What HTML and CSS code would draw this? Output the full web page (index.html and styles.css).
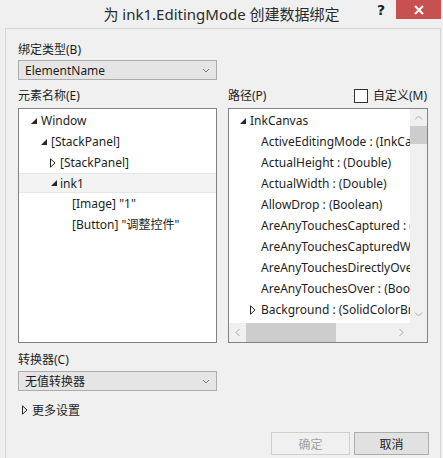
FILE: index.html
```html
<!DOCTYPE html>
<html>
<head>
<meta charset="utf-8">
<link rel="stylesheet" href="styles.css">
</head>
<body>
<div class="window">
  <div class="titlebar">
    <div class="title">为 ink1.EditingMode 创建数据绑定</div>
    <div class="help">?</div>
    <div class="close"><svg width="12" height="12" viewBox="0 0 12 12"><path d="M2 2 L10 10 M10 2 L2 10" stroke="#fff" stroke-width="2"/></svg></div>
  </div>
  <div class="panel">
    <div class="label">绑定类型(B)</div>
    <div class="combo first-combo"><span>ElementName</span><svg class="chev" width="8" height="5" viewBox="0 0 8 5"><path d="M1 1 L4 4 L7 1" stroke="#7a7a7a" fill="none"/></svg></div>

    <div class="columns">
      <div class="col">
        <div class="col-head"><span class="label">元素名称(E)</span></div>
        <div class="box tree">
          <div class="row l0"><span class="arr exp"><svg width="6" height="6" viewBox="0 0 6 6"><path d="M6 0 L6 6 L0 6 Z" fill="#262626"/></svg></span>Window</div>
          <div class="row l1"><span class="arr exp"><svg width="6" height="6" viewBox="0 0 6 6"><path d="M6 0 L6 6 L0 6 Z" fill="#262626"/></svg></span>[StackPanel]</div>
          <div class="row l2"><span class="arr col-arr"><svg width="6" height="10" viewBox="0 0 6 10"><path d="M0.5 0.8 L5 5 L0.5 9.2 Z" fill="none" stroke="#262626"/></svg></span>[StackPanel]</div>
          <div class="row l2 sel"><span class="arr exp"><svg width="6" height="6" viewBox="0 0 6 6"><path d="M6 0 L6 6 L0 6 Z" fill="#262626"/></svg></span>ink1</div>
          <div class="row l3">[Image] "1"</div>
          <div class="row l3">[Button] "调整控件"</div>
        </div>
      </div>
      <div class="col">
        <div class="col-head"><span class="label">路径(P)</span><span class="check"><span class="cbox"></span><span class="label">自定义(M)</span></span></div>
        <div class="box pathbox">
          <div class="pathview">
            <div class="row p0"><span class="arr exp"><svg width="6" height="6" viewBox="0 0 6 6"><path d="M6 0 L6 6 L0 6 Z" fill="#262626"/></svg></span>InkCanvas</div>
            <div class="row p1">ActiveEditingMode : (InkCanvasEditingMode)</div>
            <div class="row p1">ActualHeight : (Double)</div>
            <div class="row p1">ActualWidth : (Double)</div>
            <div class="row p1">AllowDrop : (Boolean)</div>
            <div class="row p1">AreAnyTouchesCaptured : (Boolean)</div>
            <div class="row p1">AreAnyTouchesCapturedWithin : (Boolean)</div>
            <div class="row p1">AreAnyTouchesDirectlyOver : (Boolean)</div>
            <div class="row p1">AreAnyTouchesOver : (Boolean)</div>
            <div class="row p0b"><span class="arr col-arr"><svg width="6" height="10" viewBox="0 0 6 10"><path d="M0.5 0.8 L5 5 L0.5 9.2 Z" fill="none" stroke="#262626"/></svg></span>Background : (SolidColorBrush)</div>
            <div class="row p0b"><span class="arr col-arr"><svg width="6" height="10" viewBox="0 0 6 10"><path d="M0.5 0.8 L5 5 L0.5 9.2 Z" fill="none" stroke="#262626"/></svg></span>BindingGroup : (BindingGroup)</div>
          </div>
          <div class="vscroll">
            <svg class="sarrow" width="9" height="5" viewBox="0 0 9 5"><path d="M1 4.5 L4.5 1 L8 4.5" stroke="#a6a6a6" fill="none"/></svg>
            <div class="vthumb"></div>
            <div class="vfill"></div>
            <svg class="sarrow" width="9" height="5" viewBox="0 0 9 5"><path d="M1 0.5 L4.5 4 L8 0.5" stroke="#a6a6a6" fill="none"/></svg>
          </div>
          <div class="hscroll">
            <svg class="harrow" width="5" height="9" viewBox="0 0 5 9"><path d="M4.5 1 L1 4.5 L4.5 8" stroke="#a6a6a6" fill="none"/></svg>
            <div class="hthumb"></div>
            <div class="hfill"></div>
            <svg class="harrow" width="5" height="9" viewBox="0 0 5 9"><path d="M0.5 1 L4 4.5 L0.5 8" stroke="#a6a6a6" fill="none"/></svg>
          </div>
          <div class="corner"></div>
        </div>
      </div>
    </div>

    <div class="label conv-label">转换器(C)</div>
    <div class="combo conv-combo"><span>无值转换器</span><svg class="chev" width="8" height="5" viewBox="0 0 8 5"><path d="M1 1 L4 4 L7 1" stroke="#7a7a7a" fill="none"/></svg></div>

    <div class="more"><svg width="6" height="10" viewBox="0 0 6 10"><path d="M0.5 0.8 L5 5 L0.5 9.2 Z" fill="none" stroke="#262626"/></svg><span>更多设置</span></div>

    <div class="buttons">
      <div class="btn disabled">确定</div>
      <div class="btn cancel">取消</div>
    </div>
  </div>
</div>
</body>
</html>
```
FILE: styles.css
```css
* { box-sizing: border-box; }
html, body { margin: 0; padding: 0; }
body {
  width: 443px; height: 458px; overflow: hidden;
  background: #f0f0f0;
  font-family: "Segoe UI", "Noto Sans", "Noto Sans CJK SC", sans-serif;
  font-size: 12px; color: #1e1e1e;
}
.window { width: 443px; height: 458px; display: flex; flex-direction: column; }
.titlebar { height: 28px; position: relative; flex: none; }
.title {
  text-align: center; font-size: 15px; line-height: 28px; color: #2b2b2b;
  font-family: "Segoe UI", "Noto Sans", "Noto Sans CJK SC", sans-serif;
}
.help {
  position: absolute; left: 377px; top: 1px; font-weight: bold; font-size: 14px;
  line-height: 18px; color: #222; font-family: "DejaVu Sans", sans-serif;
}
.close {
  position: absolute; left: 396px; top: 0; width: 45px; height: 19px;
  background: #c75050; display: flex; align-items: center; justify-content: center;
}
.panel {
  flex: 1; margin-left: 5px; width: 436px;
  border: 1px solid #d5d5d5; border-bottom: none;
  padding: 13px 0 0 12px;
  display: flex; flex-direction: column;
}
.label { line-height: 16px; height: 16px; white-space: nowrap; }
.combo {
  width: 199px; height: 20px; border: 1px solid #acacac; background: #e5e5e5;
  display: flex; align-items: center; justify-content: space-between;
  padding: 0 6px 0 6px;
}
.first-combo { margin-top: 2px; }
.chev { margin-right: 0; }
.columns { display: flex; gap: 11px; margin-top: 8px; }
.col { width: 199px; display: flex; flex-direction: column; }
.col + .col { width: 200px; }
.col-head { display: flex; justify-content: space-between; align-items: center; height: 16px; }
.check { display: flex; align-items: center; gap: 5px; margin-right: 1px; }
.cbox { width: 14px; height: 14px; border: 1px solid #333; background: #fff; }
.box {
  margin-top: 4px; height: 235px; border: 1px solid #828282; background: #fff;
  overflow: hidden;
}
.tree { padding-top: 1px; }
.row { height: 21px; line-height: 21px; display: flex; align-items: center; white-space: nowrap; }
.arr { width: 10px; display: flex; align-items: center; flex: none; }
.l0 { padding-left: 12px; }
.l1 { padding-left: 22px; }
.l2 { padding-left: 31px; }
.l2 .arr.exp { padding-left: 1px; }
.l3 { padding-left: 53px; }
.sel { background: #f3f3f3; border-top: 1px solid #e6e6e6; border-bottom: 1px solid #e6e6e6; height: 20px; }
.pathbox {
  display: grid; grid-template-columns: 181px 17px; grid-template-rows: 214px 19px;
}
.pathview { overflow: hidden; padding-top: 1px; }
.p0 { padding-left: 11px; }
.p0b { padding-left: 21px; }
.p0b .arr { width: 11px; }
.p1 { padding-left: 32px; }
.vscroll { background: #f0f0f0; display: flex; flex-direction: column; align-items: center; }
.vscroll .sarrow { margin: 6px 0; flex: none; }
.vthumb { width: 17px; height: 18px; background: #cdcdcd; flex: none; }
.vfill { flex: 1; }
.hscroll { background: #f0f0f0; display: flex; align-items: center; }
.harrow { margin: 0 6px; flex: none; }
.hthumb { width: 90px; height: 19px; background: #cdcdcd; flex: none; margin-left: 0; }
.hfill { flex: 1; }
.corner { background: #f0f0f0; }
.conv-label { margin-top: 9px; }
.conv-combo { margin-top: 3px; }
.more { display: flex; align-items: center; gap: 4px; margin-top: 11px; padding-left: 4px; height: 16px; }
.buttons { display: flex; justify-content: flex-end; gap: 4px; margin-top: 14px; padding-right: 11px; }
.btn { height: 23px; display: flex; align-items: center; justify-content: center; border: 1px solid #adadad; }
.disabled { width: 79px; color: #a3a3a3; border-color: #cfcfcf; background: #f0f0f0; }
.cancel { width: 75px; background: #e1e1e1; border-color: #adadad; }
```
